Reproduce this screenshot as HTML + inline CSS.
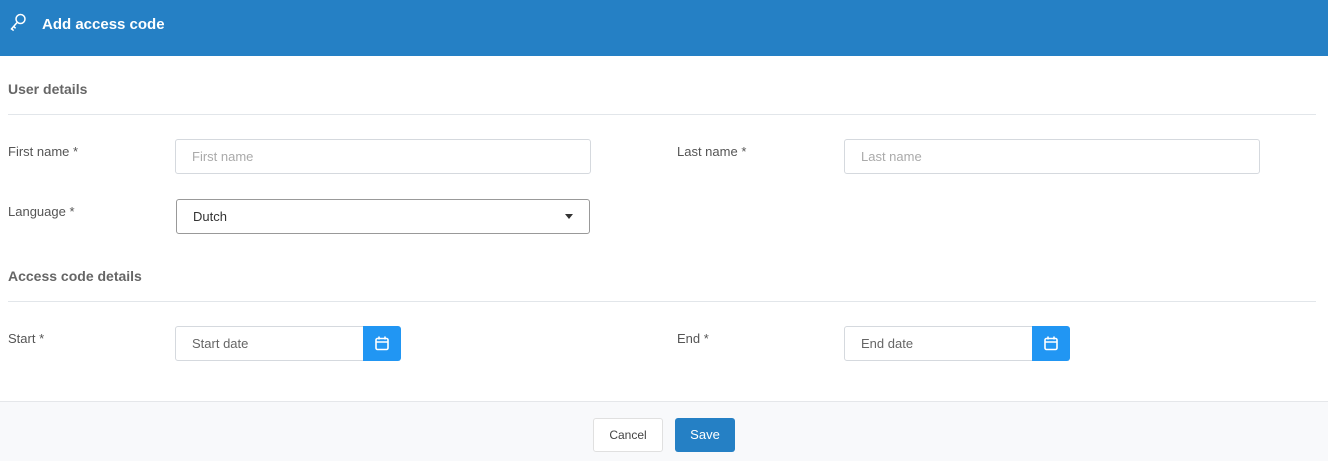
<!DOCTYPE html>
<html><head><style>
*{box-sizing:border-box;margin:0;padding:0}
body{width:1328px;height:461px;background:#fff;font-family:"Liberation Sans",sans-serif;position:relative;overflow:hidden;color:#555}
.hdr{position:absolute;left:0;top:0;width:1328px;height:56px;background:#2580c5;color:#fff}
.hdr .t{position:absolute;left:42px;top:16px;font-size:15px;font-weight:bold}
.sec{position:absolute;left:8px;font-size:14px;font-weight:bold;color:#666}
.hr{position:absolute;left:8px;width:1308px;height:1px;background:#e2e6ea}
.lbl{position:absolute;font-size:13px;color:#555}
.inp{position:absolute;height:35px;border:1px solid #d5d9de;border-radius:3px;font-size:13px;color:#aaa;padding:0 16px;line-height:33px}
.cal{position:absolute;width:38px;height:35px;background:#2196f3;border-radius:0 3px 3px 0}
.foot{position:absolute;left:0;top:401px;width:1328px;height:60px;background:#f8f9fb;border-top:1px solid #e5e7ea}
.btn{position:absolute;height:34px;border-radius:3px;font-size:12px;text-align:center;line-height:33px}
</style></head><body>
<div class="hdr">
<svg style="position:absolute;left:9px;top:13px" width="18" height="20" viewBox="0 0 18 20" fill="none" stroke="#fff" stroke-width="1.5"><circle cx="11.5" cy="6" r="4.5"/><path d="M8.3 9.3L2 16.5M4.8 13.5l1.8 1.8M2.8 15.8l1.8 1.8"/></svg>
<div class="t">Add access code</div></div>
<div class="sec" style="top:81px">User details</div>
<div class="hr" style="top:114px"></div>
<div class="lbl" style="left:8px;top:144px">First name *</div>
<div class="inp" style="left:175px;top:139px;width:416px">First name</div>
<div class="lbl" style="left:677px;top:144px">Last name *</div>
<div class="inp" style="left:844px;top:139px;width:416px">Last name</div>
<div class="lbl" style="left:8px;top:204px">Language *</div>
<div class="inp" style="left:176px;top:199px;width:414px;border-color:#999;color:#333">Dutch<span style="position:absolute;right:16px;top:14px;border:4px solid transparent;border-top:5px solid #333;border-bottom:0"></span></div>
<div class="sec" style="top:268px">Access code details</div>
<div class="hr" style="top:301px"></div>
<div class="lbl" style="left:8px;top:331px">Start *</div>
<div class="inp" style="left:175px;top:326px;width:190px;border-radius:3px 0 0 3px;color:#666">Start date</div>
<div class="cal" style="left:363px;top:326px"><svg style="position:absolute;left:12px;top:10px" width="14" height="15" viewBox="0 0 14 15" fill="none" stroke="#fff" stroke-width="1.6"><rect x="1" y="2.5" width="12" height="11" rx="1.5"/><path d="M1 6h12M4 0.5v3M10 0.5v3"/></svg></div>
<div class="lbl" style="left:677px;top:331px">End *</div>
<div class="inp" style="left:844px;top:326px;width:190px;border-radius:3px 0 0 3px;color:#666">End date</div>
<div class="cal" style="left:1032px;top:326px"><svg style="position:absolute;left:12px;top:10px" width="14" height="15" viewBox="0 0 14 15" fill="none" stroke="#fff" stroke-width="1.6"><rect x="1" y="2.5" width="12" height="11" rx="1.5"/><path d="M1 6h12M4 0.5v3M10 0.5v3"/></svg></div>
<div class="foot">
<div class="btn" style="left:593px;top:16px;width:70px;background:#fff;border:1px solid #e0e0e0;color:#444">Cancel</div>
<div class="btn" style="left:675px;top:16px;width:60px;background:#2580c5;color:#fff;font-size:13px">Save</div>
</div>
</body></html>
